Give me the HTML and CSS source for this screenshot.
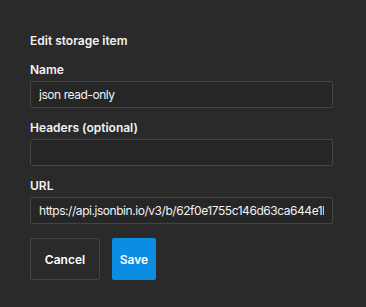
FILE: index.html
```html
<!DOCTYPE html>
<html lang="en">
<head>
<meta charset="UTF-8">
<meta name="viewport" content="width=device-width, initial-scale=1.0">
<title>Edit storage item</title>
<link rel="stylesheet" href="styles.css">
</head>
<body>
  <form class="dialog">
    <h2 class="title">Edit storage item</h2>

    <div class="field">
      <label for="name">Name</label>
      <input type="text" id="name" value="json read-only">
    </div>

    <div class="field">
      <label for="headers">Headers (optional)</label>
      <input type="text" id="headers">
    </div>

    <div class="field">
      <label for="url">URL</label>
      <input type="text" id="url" value="https://api.jsonbin.io/v3/b/62f0e1755c146d63ca644e1l">
    </div>

    <div class="actions">
      <button type="button" class="btn btn-cancel">Cancel</button>
      <button type="submit" class="btn btn-save">Save</button>
    </div>
  </form>
</body>
</html>
```

FILE: styles.css
```css
body {
  margin: 0;
  background-color: #2a2a2a;
  font-family: Inter, "Noto Sans", sans-serif;
  font-size: 12px;
  color: #f2f2f2;
}
.dialog {
  width: 303px;
  padding: 33px 0 0 30px;
}
.title {
  margin: 0 0 13px;
  font-size: 12px;
  line-height: 16px;
  font-weight: 600;
}
.field {
  display: flex;
  flex-direction: column;
  gap: 3px;
  margin-bottom: 12px;
}
.field label {
  font-weight: 600;
  line-height: 16px;
}
.field input {
  box-sizing: border-box;
  height: 27px;
  padding: 0 8px;
  border: 1px solid #444;
  border-radius: 2px;
  background-color: #262626;
  color: #f2f2f2;
  font-family: inherit;
  font-size: 12px;
  letter-spacing: -0.45px;
  outline: none;
}
.actions {
  display: flex;
  gap: 12px;
  margin-top: 14px;
}
.btn {
  height: 42px;
  border-radius: 2px;
  font-family: inherit;
  font-size: 12px;
  font-weight: 600;
  color: #fff;
  cursor: pointer;
}
.btn-cancel {
  width: 70px;
  background-color: transparent;
  border: 1px solid #444;
}
.btn-save {
  width: 44px;
  padding: 0;
  background-color: #0a8de2;
  border: none;
}
```
